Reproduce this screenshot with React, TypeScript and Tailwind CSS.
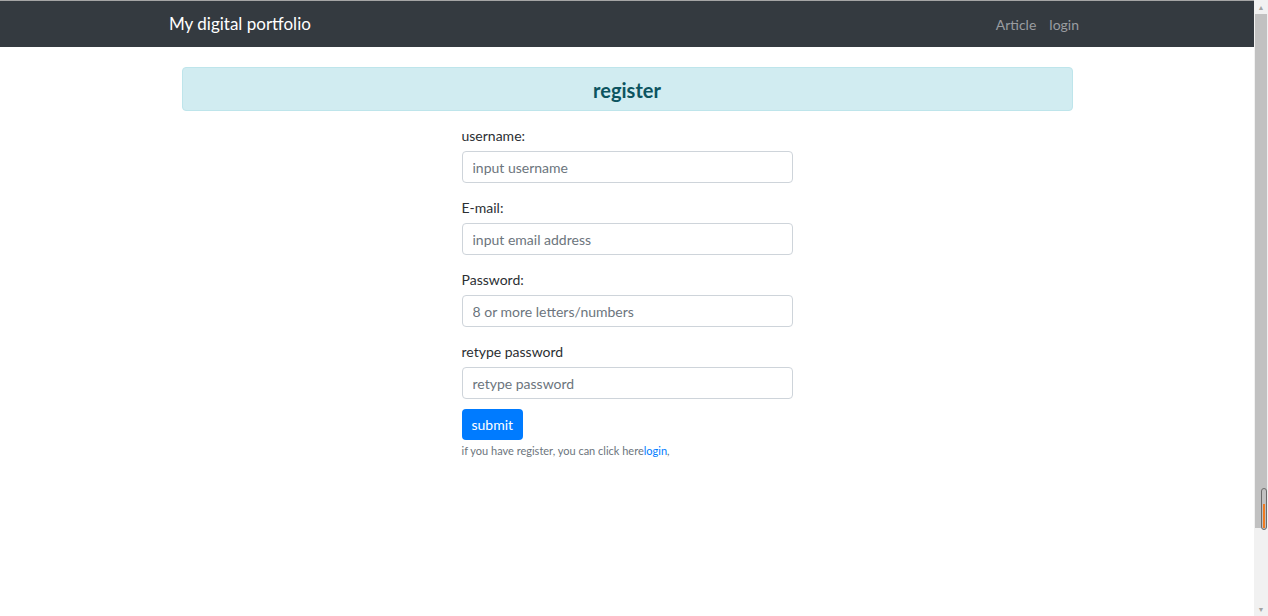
const font = { fontFamily: 'Lato, "Open Sans", "Liberation Sans", sans-serif' };

function Field({ label, placeholder, type = 'text' }: { label: string; placeholder: string; type?: string }) {
    return (
        <div className="mb-[15px]">
            <label className="mb-[6px] block text-[14px] leading-[19px] text-[#2b2f33]">{label}</label>
            <input
                type={type}
                placeholder={placeholder}
                className="block h-[32px] w-full rounded-[4px] border border-[#ced4da] bg-white px-[10px] text-[14px] text-[#495057] outline-none placeholder:text-[#6c757d]"
            />
        </div>
    );
}

function Scrollbar() {
    return (
        <div className="relative flex h-full w-[14px] shrink-0 flex-col bg-[#f1f1f1]">
            <div className="flex h-[14px] items-center justify-center text-[#a3a3a3]">
                <span className="text-[7px] leading-none">▲</span>
            </div>
            <div className="mx-[1px] h-[514px] bg-[#c1c1c1]" />
            <div className="absolute left-[7px] top-[488px] h-[42px] w-[6px] rounded-[3px] border border-[#6b6b6b] bg-[#c1c1c1]">
                <div className="absolute bottom-[1px] left-[1px] h-[24px] w-[2px] bg-[#f07b21]" />
            </div>
            <div className="mt-auto flex h-[14px] items-center justify-center text-[#a3a3a3]">
                <span className="text-[7px] leading-none">▼</span>
            </div>
        </div>
    );
}

export default function App() {
    return (
        <div className="flex h-[616px] w-[1268px] overflow-hidden bg-white" style={font}>
            <div className="flex-1">
                <nav className="h-[47px] border-t border-[#a5a5a5] bg-[#343a40]">
                    <div className="mx-auto flex h-full w-[916px] items-center justify-between pr-[6px]">
                        <a className="text-[17px] text-white">My digital portfolio</a>
                        <div className="flex gap-[13px] text-[14px] text-[#9a9da0]">
                            <a>Article</a>
                            <a>login</a>
                        </div>
                    </div>
                </nav>
                <div className="mx-auto mt-[20px] w-[891px]">
                    <div className="flex h-[44px] items-center justify-center rounded-[4px] border border-[#bee5eb] bg-[#d1ecf1]">
                        <h3 className="pt-[1px] text-[20px] font-bold text-[#0c5460]">register</h3>
                    </div>
                </div>
                <form className="mx-auto mt-[15px] w-[331px]">
                    <Field label="username:" placeholder="input username" />
                    <Field label="E-mail:" placeholder="input email address" />
                    <Field label="Password:" placeholder="8 or more letters/numbers" type="password" />
                    <Field label="retype password" placeholder="retype password" type="password" />
                    <button type="button" className="-mt-[5px] block h-[31px] rounded-[4px] bg-[#007bff] px-[10px] text-[14px] text-white">
                        submit
                    </button>
                    <p className="mt-[2px] text-[11px] leading-[18px] text-[#6c757d]">
                        if you have register, you can click here<a className="text-[#007bff]">login</a>,
                    </p>
                </form>
            </div>
            <Scrollbar />
        </div>
    );
}
